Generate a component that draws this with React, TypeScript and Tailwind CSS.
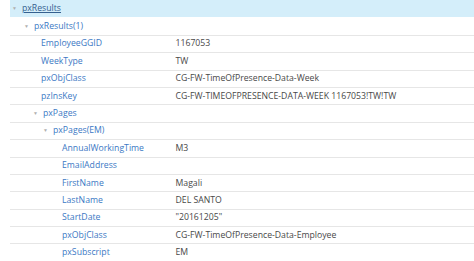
import React from "react";

type Row = { label: string; value?: string; level: number; node?: boolean; top?: boolean; noBorder?: boolean };

const rows: Row[] = [
  { label: "pxResults", level: 0, node: true, top: true },
  { label: "pxResults(1)", level: 1, node: true, noBorder: true },
  { label: "EmployeeGGID", value: "1167053", level: 2 },
  { label: "WeekType", value: "TW", level: 2 },
  { label: "pxObjClass", value: "CG-FW-TimeOfPresence-Data-Week", level: 2 },
  { label: "pzInsKey", value: "CG-FW-TIMEOFPRESENCE-DATA-WEEK 1167053!TW!TW", level: 2 },
  { label: "pxPages", level: 2, node: true },
  { label: "pxPages(EM)", level: 3, node: true },
  { label: "AnnualWorkingTime", value: "M3", level: 4 },
  { label: "EmailAddress", value: "", level: 4 },
  { label: "FirstName", value: "Magali", level: 4 },
  { label: "LastName", value: "DEL SANTO", level: 4 },
  { label: "StartDate", value: "\"20161205\"", level: 4 },
  { label: "pxObjClass", value: "CG-FW-TimeOfPresence-Data-Employee", level: 4 },
  { label: "pxSubscript", value: "EM", level: 4 },
];

const pad: Record<number, string> = {
  0: "pl-[2px]",
  1: "pl-[14px]",
  2: "pl-[23px]",
  3: "pl-[33px]",
};
const leafPad: Record<number, string> = {
  2: "pl-[31px]",
  4: "pl-[52px]",
};

export default function App() {
  return (
    <div
      className="w-[474px] h-[261px] bg-white overflow-hidden pl-[10px]"
      style={{ fontFamily: '"Open Sans", "Noto Sans", sans-serif' }}
    >
      {rows.map((r, i) => (
        <div
          key={i}
          className={
            "flex items-center h-[17.4px] text-[8.7px] " +
            (r.top ? "bg-[#d4eefa] " : "") +
            (!r.top && !r.noBorder ? "border-t border-[#e6e6e6] " : "")
          }
        >
          <div className={"w-[165px] shrink-0 flex items-center " + (r.node ? pad[r.level] : leafPad[r.level])}>
            {r.node && <span className="text-[#b0b0b0] text-[5px] w-[10px] shrink-0 leading-none">▼</span>}
            <span className={r.top ? "underline text-[#35608f]" : "text-[#3b78c4]"}>{r.label}</span>
          </div>
          <div className="text-[#484848] whitespace-nowrap pl-[0.5px]">{r.value}</div>
        </div>
      ))}
    </div>
  );
}
